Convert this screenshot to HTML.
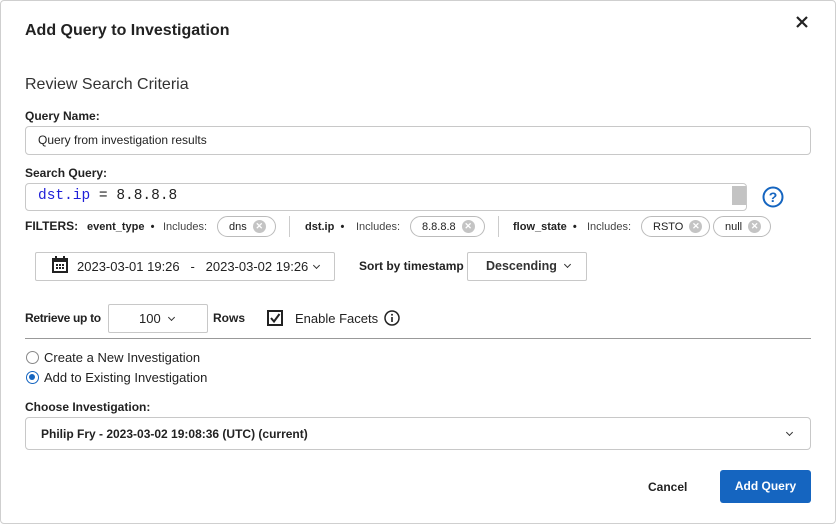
<!DOCTYPE html>
<html><head><style>
*{box-sizing:border-box;margin:0;padding:0}
body{width:836px;height:524px;background:#fff;font-family:"Liberation Sans",Arial,sans-serif;color:#222;position:relative;overflow:hidden}
.frame{position:absolute;left:0;top:0;width:836px;height:524px;border:1px solid #cfcfcf;border-radius:4px}
.a{position:absolute;white-space:nowrap}
.b{font-weight:bold}
.box{position:absolute;border:1px solid #c8c8c8;border-radius:4px;background:#fff}
.chip{position:absolute;height:21px;border:1px solid #bbb;border-radius:11px;font-size:11px;display:flex;align-items:center;padding-left:11px}
.x{margin-left:6px;width:13px;height:13px;border-radius:50%;background:#c4c4c4;color:#fff;font-size:9px;line-height:13px;text-align:center;font-weight:bold}
.f{font-size:11px;top:221px}
.chev{display:inline-block;width:5px;height:5px;border-right:1.5px solid #333;border-bottom:1.5px solid #333;transform:rotate(45deg);margin-left:7px;position:relative;top:-3px}
</style></head><body>
<div class="frame"></div>
<div class="a b" style="left:25px;top:22px;font-size:16px">Add Query to Investigation</div>
<svg class="a" style="left:796px;top:16px" width="12" height="12"><path d="M1 1L11 11M11 1L1 11" stroke="#222" stroke-width="2.2"/></svg>
<div class="a" style="left:25px;top:76px;font-size:16px;color:#333">Review Search Criteria</div>
<div class="a b" style="left:25px;top:109px;font-size:12px">Query Name:</div>
<div class="box" style="left:25px;top:126px;width:786px;height:29px"></div>
<div class="a" style="left:38px;top:133px;font-size:12px">Query from investigation results</div>
<div class="a b" style="left:25px;top:166px;font-size:12px">Search Query:</div>
<div class="box" style="left:25px;top:183px;width:722px;height:28px"></div>
<div class="a" style="left:732px;top:186px;width:14px;height:19px;background:#c3c3c3"></div>
<div class="a" style="left:38px;top:188px;font-family:'Liberation Mono',monospace;font-size:14.5px"><span style="color:#1f1fd8">dst.ip</span> = 8.8.8.8</div>
<svg class="a" style="left:762px;top:186px" width="22" height="22"><circle cx="11" cy="11" r="9.5" fill="none" stroke="#1565c0" stroke-width="2"/><text x="11" y="16" text-anchor="middle" font-family="Liberation Sans" font-size="14" font-weight="bold" fill="#1565c0">?</text></svg>
<div class="a b" style="left:25px;top:219px;font-size:12px">FILTERS:</div>
<div class="a b f" style="left:87px">event_type &nbsp;•</div>
<div class="a f" style="left:163px;color:#444">Includes:</div>
<div class="chip" style="left:217px;top:216px;width:59px">dns<span class="x">✕</span></div>
<div class="a" style="left:289px;top:216px;width:1px;height:21px;background:#ccc"></div>
<div class="a b f" style="left:305px">dst.ip &nbsp;•</div>
<div class="a f" style="left:356px;color:#444">Includes:</div>
<div class="chip" style="left:410px;top:216px;width:75px">8.8.8.8<span class="x">✕</span></div>
<div class="a" style="left:498px;top:216px;width:1px;height:21px;background:#ccc"></div>
<div class="a b f" style="left:513px">flow_state &nbsp;•</div>
<div class="a f" style="left:587px;color:#444">Includes:</div>
<div class="chip" style="left:641px;top:216px;width:69px">RSTO<span class="x">✕</span></div>
<div class="chip" style="left:713px;top:216px;width:58px">null<span class="x">✕</span></div>
<div class="box" style="left:35px;top:252px;width:300px;height:29px;border-radius:2px"></div>
<svg class="a" style="left:52px;top:256px" width="16" height="17"><rect x="1" y="3" width="14" height="13" fill="none" stroke="#222" stroke-width="2"/><rect x="1" y="3" width="14" height="3" fill="#222"/><rect x="3" y="0" width="2" height="4" fill="#222"/><rect x="11" y="0" width="2" height="4" fill="#222"/><g fill="#222"><rect x="4" y="8" width="2" height="2"/><rect x="7" y="8" width="2" height="2"/><rect x="10" y="8" width="2" height="2"/><rect x="4" y="11" width="2" height="2"/><rect x="7" y="11" width="2" height="2"/><rect x="10" y="11" width="2" height="2"/></g></svg>
<div class="a" style="left:77px;top:259px;font-size:13px">2023-03-01 19:26 &nbsp;&nbsp;- &nbsp;&nbsp;2023-03-02 19:26<span class="chev" style="margin-left:6px"></span></div>
<div class="a b" style="left:359px;top:259px;font-size:12px">Sort by timestamp</div>
<div class="box" style="left:467px;top:252px;width:120px;height:29px;border-radius:2px"></div>
<div class="a b" style="left:486px;top:259px;font-size:12.5px;color:#333">Descending<span class="chev" style="margin-left:8px"></span></div>
<div class="a b" style="left:25px;top:311px;font-size:12px;letter-spacing:-0.3px">Retrieve up to</div>
<div class="box" style="left:108px;top:304px;width:100px;height:29px;border-radius:2px"></div>
<div class="a" style="left:139px;top:311px;font-size:13px">100<span class="chev" style="margin-left:8px"></span></div>
<div class="a b" style="left:213px;top:311px;font-size:12px">Rows</div>
<div class="a" style="left:267px;top:310px;width:16px;height:16px;border:2px solid #222"></div>
<svg class="a" style="left:269px;top:312px" width="12" height="12"><path d="M2 6L5 9.5L10.5 2" fill="none" stroke="#222" stroke-width="2"/></svg>
<div class="a" style="left:295px;top:311px;font-size:13px">Enable Facets</div>
<svg class="a" style="left:384px;top:310px" width="16" height="16"><circle cx="8" cy="8" r="7" fill="none" stroke="#222" stroke-width="1.5"/><rect x="7.2" y="7" width="1.6" height="5" fill="#222"/><circle cx="8" cy="4.8" r="1" fill="#222"/></svg>
<div class="a" style="left:25px;top:338px;width:786px;height:1px;background:#999"></div>
<div class="a" style="left:26px;top:351px;width:13px;height:13px;border:1.5px solid #888;border-radius:50%"></div>
<div class="a" style="left:44px;top:350px;font-size:13px">Create a New Investigation</div>
<div class="a" style="left:26px;top:371px;width:13px;height:13px;border:1.5px solid #1565c0;border-radius:50%"><div style="margin:2px;width:6px;height:6px;border-radius:50%;background:#1565c0"></div></div>
<div class="a" style="left:44px;top:370px;font-size:13px">Add to Existing Investigation</div>
<div class="a b" style="left:25px;top:400px;font-size:12px">Choose Investigation:</div>
<div class="box" style="left:25px;top:417px;width:786px;height:33px"></div>
<div class="a b" style="left:41px;top:427px;font-size:12px">Philip Fry - 2023-03-02 19:08:36 (UTC) (current)</div>
<div class="a" style="left:787px;top:430px;width:5px;height:5px;border-right:1.5px solid #333;border-bottom:1.5px solid #333;transform:rotate(45deg)"></div>
<div class="a b" style="left:648px;top:480px;font-size:12px;color:#222">Cancel</div>
<div class="a" style="left:720px;top:470px;width:91px;height:33px;background:#1565c0;border-radius:3px;color:#fff;font-weight:bold;font-size:12px;text-align:center;line-height:33px">Add Query</div>
</body></html>
